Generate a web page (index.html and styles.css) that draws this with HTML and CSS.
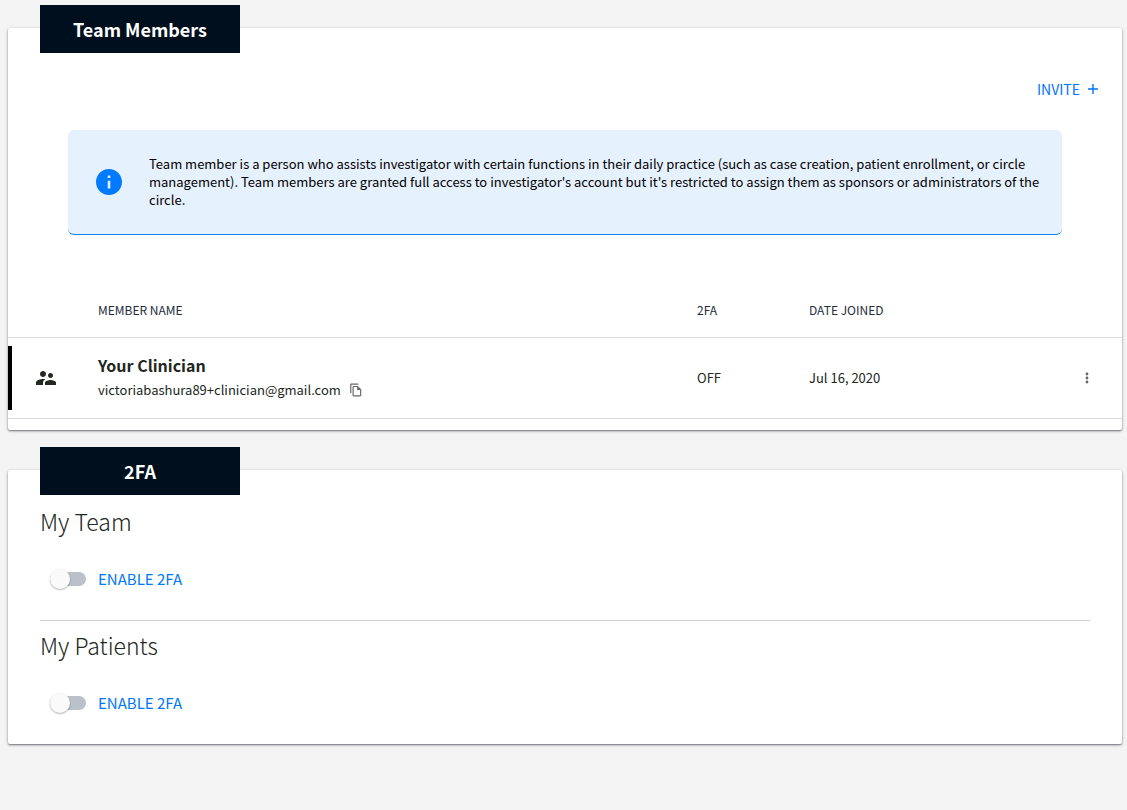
FILE: index.html
```html
<!DOCTYPE html>
<html lang="en">
<head>
<meta charset="utf-8">
<meta name="viewport" content="width=device-width, initial-scale=1">
<title>Team Members</title>
<link rel="stylesheet" href="styles.css">
</head>
<body>
<main class="page">
  <section class="card">
    <h2 class="card-title">Team Members</h2>
    <div class="toolbar">
      <button class="invite" type="button">INVITE
        <svg class="plus" viewBox="0 0 10 10" aria-hidden="true"><path d="M5 0v10M0 5h10" stroke="currentColor" stroke-width="1.4"/></svg>
      </button>
    </div>
    <div class="notice">
      <svg class="notice-icon" viewBox="2 2 20 20" aria-hidden="true"><path fill="currentColor" d="M12 2C6.48 2 2 6.48 2 12s4.480 10 10 10 10-4.480 10-10S17.520 2 12 2zm1 15h-2v-6h2v6zm0-8h-2V7h2v2z"/></svg>
      <p class="notice-text">Team member is a person who assists investigator with certain functions in their daily practice (such as case creation, patient enrollment, or circle management). Team members are granted full access to investigator's account but it's restricted to assign them as sponsors or administrators of the circle.</p>
    </div>
    <table class="members">
      <thead>
        <tr>
          <th class="col-icon"></th>
          <th class="col-name" scope="col">MEMBER NAME</th>
          <th class="col-auth" scope="col">2FA</th>
          <th class="col-date" scope="col">DATE JOINED</th>
          <th class="col-menu"></th>
        </tr>
      </thead>
      <tbody>
        <tr>
          <td class="col-icon">
            <div class="marker">
              <svg class="people" viewBox="2 5 20 14" aria-hidden="true"><path fill="currentColor" d="M16.500 12c1.380 0 2.490-1.120 2.490-2.500S17.880 7 16.500 7 14 8.120 14 9.500s1.120 2.500 2.500 2.500zM9 11c1.660 0 2.990-1.340 2.990-3S10.660 5 9 5 6 6.340 6 8s1.340 3 3 3zm7.500 3c-1.830 0-5.500.92-5.500 2.750V19h11v-2.250c0-1.830-3.670-2.750-5.500-2.750zM9 13c-2.330 0-7 1.170-7 3.500V19h7v-2.250c0-.85.33-2.340 2.370-3.470C10.500 13.100 9.660 13 9 13z"/></svg>
            </div>
          </td>
          <td class="col-name">
            <div class="member-name">Your Clinician</div>
            <div class="member-mail">victoriabashura89+clinician@gmail.com
              <button class="icon-button" type="button" aria-label="Copy email">
                <svg class="copy" viewBox="0 0 24 24" aria-hidden="true"><path fill="currentColor" d="M16 1H4c-1.100 0-2 .9-2 2v14h2V3h12V1zm-1 4H8c-1.100 0-2 .9-2 2v14c0 1.100.9 2 2 2h11c1.100 0 2-.9 2-2V11l-6-6zM8 21V7h6v5h5v9H8z"/></svg>
              </button>
            </div>
          </td>
          <td class="col-auth">OFF</td>
          <td class="col-date">Jul 16, 2020</td>
          <td class="col-menu">
            <button class="icon-button" type="button" aria-label="Member actions">
              <svg class="dots" viewBox="0 0 4 12" aria-hidden="true"><g fill="currentColor"><circle cx="2" cy="2" r="1.400"/><circle cx="2" cy="6" r="1.400"/><circle cx="2" cy="10" r="1.400"/></g></svg>
            </button>
          </td>
        </tr>
      </tbody>
    </table>
  </section>

  <section class="card">
    <h2 class="card-title">2FA</h2>
    <div class="setting">
      <h3 class="setting-title">My Team</h3>
      <label class="switch"><input class="switch-input" type="checkbox" role="switch">ENABLE 2FA</label>
    </div>
    <div class="setting">
      <h3 class="setting-title">My Patients</h3>
      <label class="switch"><input class="switch-input" type="checkbox" role="switch">ENABLE 2FA</label>
    </div>
  </section>
</main>
</body>
</html>
```
FILE: styles.css
```css
* {
  box-sizing: border-box;
}

body {
  margin: 0;
  background: #f4f4f4;
  color: #212721;
  font-family: "Noto Sans CJK SC", "Noto Sans", sans-serif;
  font-size: 13px;
}

button {
  padding: 0;
  border: 0;
  background: none;
  font: inherit;
  cursor: pointer;
}

svg {
  display: block;
}

.page {
  display: flex;
  flex-direction: column;
  gap: 40px;
  padding: 28px 5px 28px 8px;
}

.card {
  border-radius: 2px;
  background: #fff;
  box-shadow: 0 1px 2px rgba(0, 0, 20, 0.5), 0 1px 4px rgba(0, 0, 0, 0.12);
}

.card-title {
  width: 200px;
  height: 48px;
  margin: -23px 0 2px 32px;
  background: #000f1e;
  color: #fff;
  font-size: 18px;
  line-height: 48px;
  text-align: center;
}

.toolbar {
  display: flex;
  justify-content: flex-end;
  padding: 22px 24px 0;
}

.invite {
  display: flex;
  align-items: center;
  gap: 8px;
  color: #0075ff;
  font-size: 14px;
  line-height: 24px;
}

.plus {
  width: 10px;
  height: 10px;
}

.notice {
  display: flex;
  align-items: center;
  gap: 27px;
  margin: 29px 60px 0;
  padding: 25px 16px 25px 28px;
  border-bottom: 1px solid #0a84f5;
  border-radius: 6px;
  background: #e6f1fe;
  color: #000;
}

.notice-icon {
  flex: none;
  width: 26px;
  height: 26px;
  color: #007aff;
}

.notice-text {
  margin: 0;
  font-size: 13px;
  line-height: 18px;
}

.members {
  width: 100%;
  margin: 47px 0 11px;
  border-collapse: collapse;
  table-layout: fixed;
}

.members th,
.members td {
  padding: 0;
  border-bottom: 1px solid #dedede;
  text-align: left;
}

.members th {
  height: 55px;
  color: #222d3d;
  font-size: 12px;
  font-weight: 400;
}

.members td {
  height: 81px;
}

.members .col-icon {
  width: 90px;
}

.col-auth {
  width: 112px;
}

.col-date {
  width: 264px;
}

.col-menu {
  width: 49px;
}

.marker {
  display: flex;
  align-items: center;
  height: 64px;
  padding-left: 24px;
  border-left: 4px solid #000;
}

.people {
  width: 20px;
  height: 14px;
}

.member-name {
  font-size: 16px;
  font-weight: 700;
  line-height: 24px;
}

.member-mail {
  display: flex;
  align-items: center;
  gap: 8px;
  line-height: 26px;
}

.icon-button {
  display: block;
  color: #666;
}

.copy {
  width: 14px;
  height: 14px;
}

.dots {
  width: 4px;
  height: 12px;
  margin-left: 12px;
}

.setting {
  margin: 0 32px;
}

.setting + .setting {
  border-top: 1px solid #d0d0d0;
}

.setting-title {
  margin: 0;
  padding-top: 4px;
  font-size: 23px;
  font-weight: 300;
  line-height: 40px;
}

.switch {
  display: flex;
  align-items: center;
  gap: 12px;
  padding: 26px 0 29px 10px;
  color: #0078f8;
  font-size: 15px;
  line-height: 24px;
}

.switch-input {
  display: flex;
  align-items: center;
  width: 36px;
  height: 14px;
  margin: 0;
  border-radius: 7px;
  background: #bbc1c8;
  appearance: none;
}

.switch-input::before {
  width: 20px;
  height: 20px;
  border-radius: 50%;
  background: #fafafa;
  box-shadow: 0 1px 2px rgba(0, 0, 0, 0.3);
  content: "";
}

.switch-input:checked {
  justify-content: flex-end;
  background: #0078f8;
}
```
